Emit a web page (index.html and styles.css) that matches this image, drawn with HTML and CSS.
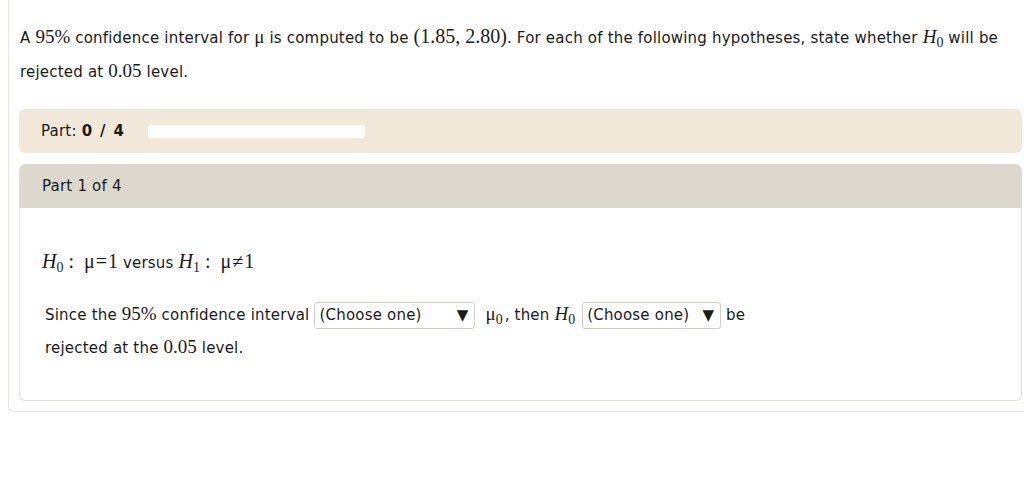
FILE: index.html
```html
<!DOCTYPE html>
<html>
<head>
<meta charset="utf-8">
<link rel="stylesheet" href="styles.css">
</head>
<body>
<div class="frame">
  <p class="intro">A <span class="m">95%</span> confidence interval for <span class="m">μ</span> is computed to be <span class="m big">(1.85, 2.80)</span>. For each of the following hypotheses, state whether <span class="m"><i>H</i><sub>0</sub></span> will be rejected at <span class="m">0.05</span> level.</p>

  <div class="partbar">
    <span class="partlabel">Part: <b>0 / 4</b></span>
    <span class="progress"></span>
  </div>

  <div class="card">
    <div class="cardhead">Part 1 of 4</div>
    <div class="cardbody">
      <p class="hyp"><span class="m"><i>H</i><sub>0</sub> :&nbsp; μ<span class="op">=</span>1</span> versus <span class="m"><i>H</i><sub>1</sub> :&nbsp; μ<span class="op">≠</span>1</span></p>
      <p class="since">Since the <span class="m">95%</span> confidence interval <span class="dd dd-wide"><span>(Choose one)</span><span class="arr">▼</span></span> <span class="m mu0">μ<sub>0</sub></span>, then <span class="m h0">
<i>H</i><sub>0</sub></span> <span class="dd"><span>(Choose one)</span><span class="arr">▼</span></span> be rejected at the <span class="m">0.05</span> level.</p>
    </div>
  </div>
</div>
</body>
</html>
```

FILE: styles.css
```css
html, body {
  margin: 0;
  padding: 0;
  overflow: hidden;
  background: #ffffff;
}
body {
  font-family: "DejaVu Sans", Verdana, sans-serif;
  font-size: 15px;
  letter-spacing: 0.2px;
  color: #1a1a1a;
}
.frame {
  margin-left: 8px;
  width: 1040px;
  border-left: 1px solid #e8e6e1;
  border-bottom: 1px solid #e8e6e1;
  border-bottom-left-radius: 6px;
  padding: 21px 0 10px 10px;
  box-sizing: border-box;
}
.intro {
  margin: 0 0 20px 1px;
  width: 1000px;
  line-height: 34px;
}
.m {
  font-family: "Liberation Serif", "Times New Roman", serif;
  font-size: 19px;
  letter-spacing: 0;
  line-height: 1;
}
.m i {
  font-style: italic;
}
.m sub {
  font-size: 14px;
  vertical-align: -4px;
  line-height: 0;
}
.big {
  font-size: 20px;
}
.op {
  margin: 0 1px;
}
.partbar {
  width: 1003px;
  height: 44px;
  background: #f2e8da;
  border-radius: 6px;
  display: flex;
  align-items: center;
  padding-left: 22px;
  box-sizing: border-box;
}
.partlabel {
  width: 107px;
}
.partlabel b {
  letter-spacing: 1.4px;
}
.progress {
  width: 217px;
  height: 13px;
  background: #ffffff;
  border-radius: 3px;
}
.card {
  margin-top: 11px;
  width: 1003px;
  border: 1px solid #e3e0da;
  border-top: none;
  border-radius: 6px;
  overflow: hidden;
  box-sizing: border-box;
}
.cardhead {
  height: 44px;
  background: #ddd8ce;
  display: flex;
  align-items: center;
  padding-left: 22px;
}
.cardbody {
  padding: 35px 0 35px 25px;
}
.hyp {
  margin: 0 0 16px -3px;
  line-height: 40px;
}
.hyp .m {
  font-size: 20px;
}
.since {
  margin: 0;
  line-height: 33px;
  width: 740px;
}
.mu0 {
  margin-left: 5px;
  margin-right: 2px;
}
.h0 {
  margin-right: 2px;
}
.dd {
  display: inline-flex;
  align-items: center;
  justify-content: space-between;
  height: 27px;
  border: 1px solid #cfcdc8;
  border-radius: 3px;
  padding: 0 6px 0 4px;
  box-sizing: border-box;
  vertical-align: middle;
  width: 139px;
  background: #fff;
  line-height: 1;
}
.dd-wide {
  width: 161px;
}
.arr {
  font-size: 15px;
}
```
